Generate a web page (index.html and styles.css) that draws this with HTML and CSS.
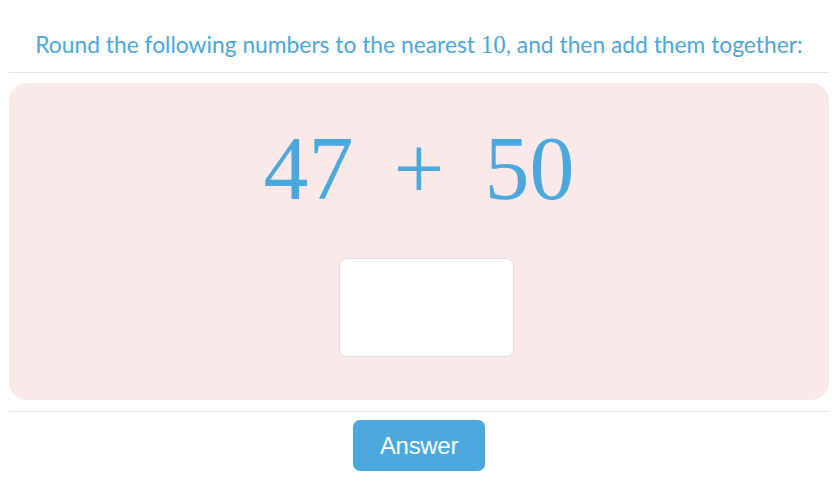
FILE: index.html
```html
<!DOCTYPE html>
<html>
<head>
<meta charset="utf-8">
<link rel="stylesheet" href="styles.css">
</head>
<body>
<div class="page">
  <div class="question">Round the following numbers to the nearest <span class="math">10</span>, and then add them together:</div>
  <div class="rule"></div>
  <div class="card">
    <div class="expr"><span>47</span><span class="op">+</span><span>50</span></div>
    <div class="answer-box"></div>
  </div>
  <div class="rule rule-bottom"></div>
  <div class="actions"><button class="btn">Answer</button></div>
</div>
</body>
</html>
```
FILE: styles.css
```css
html, body {
  margin: 0;
  padding: 0;
  background: #ffffff;
}
.page {
  width: 820px;
  padding: 0 11px 0 9px;
}
.question {
  height: 72px;
  box-sizing: border-box;
  padding-top: 31px;
  text-align: center;
  font-family: "Lato", sans-serif;
  font-size: 22.8px;
  line-height: 26px;
  color: #4aa8dc;
}
.math {
  font-family: "Liberation Serif", serif;
  font-size: 25px;
}
.rule {
  height: 1px;
  background: #e2e2e6;
}
.card {
  margin-top: 10px;
  height: 317px;
  background: #fbe8e8;
  border-radius: 18px;
  display: flex;
  flex-direction: column;
  align-items: center;
}
.expr {
  margin-top: 36px;
  display: flex;
  gap: 40px;
  font-family: "Liberation Serif", serif;
  font-size: 90px;
  line-height: 100px;
  color: #4aa8dc;
}
.answer-box {
  margin-top: 39px;
  margin-left: 14px;
  width: 173px;
  height: 97px;
  background: #ffffff;
  border: 1px solid #dfdde3;
  border-radius: 8px;
}
.rule-bottom {
  margin-top: 11px;
}
.actions {
  display: flex;
  justify-content: center;
  padding-top: 8px;
}
.btn {
  width: 132px;
  height: 51px;
  border: none;
  border-radius: 7px;
  background: #4aa8dc;
  color: #ffffff;
  font-family: "Liberation Sans", Arial, sans-serif;
  font-size: 24px;
  letter-spacing: -0.3px;
  padding: 0;
}
```
